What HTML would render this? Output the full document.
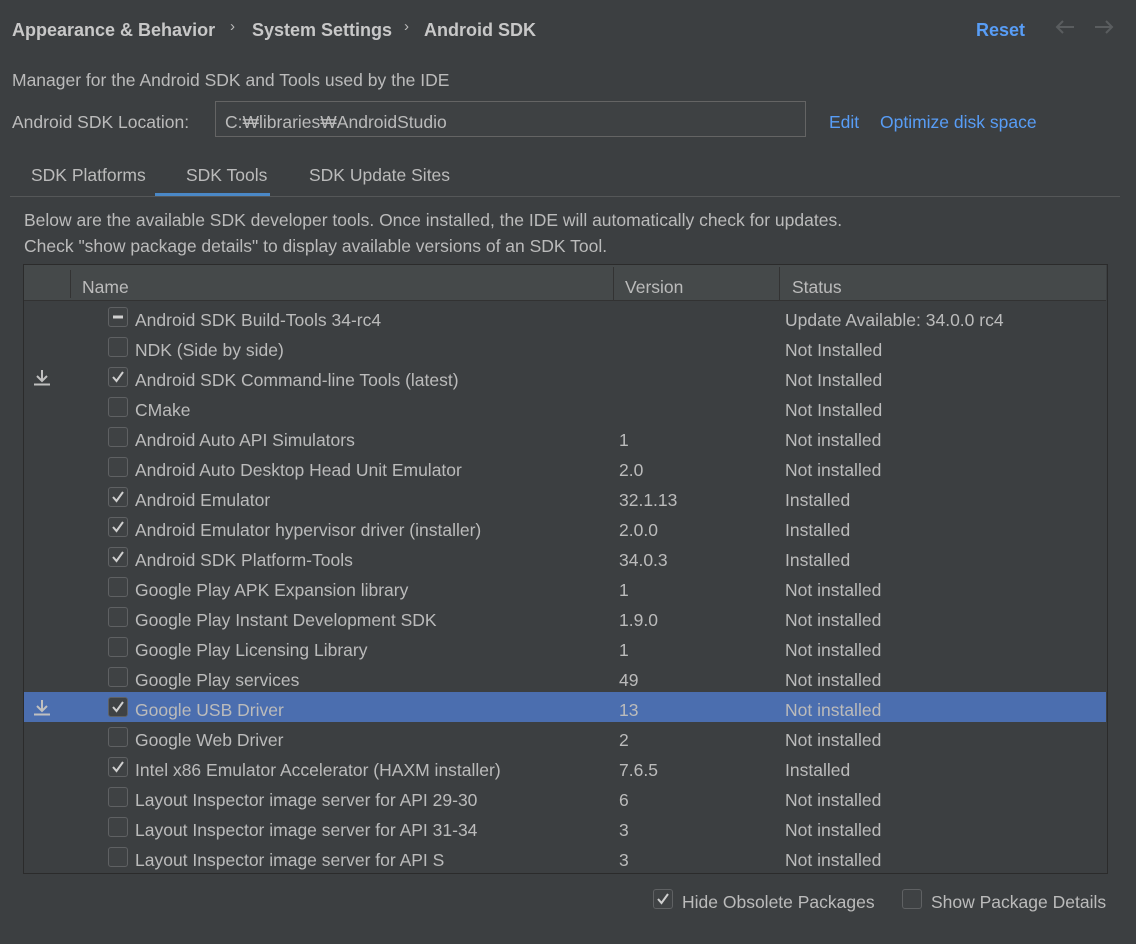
<!DOCTYPE html>
<html><head><meta charset="utf-8"><style>
*{box-sizing:border-box;margin:0;padding:0}
body{width:1136px;height:944px;background:#3c3f41;color:#bbbbbb;font-family:"Liberation Sans","Noto Sans CJK KR",sans-serif;font-size:17.5px;position:relative;overflow:hidden}
.a{position:absolute;white-space:nowrap}
.b{font-weight:bold;font-size:18px;color:#c8c8c8}
.link{color:#589df6}
.cb{position:absolute;width:20px;height:20px;border:1px solid #5f6163;border-radius:3px;background:#3f4244}
.cb svg{position:absolute;left:2px;top:2px}
.row{position:absolute;left:24px;width:1082px;height:30px}
.row span{position:absolute;top:8px}
.sel{background:#4b6eaf}
</style></head><body>
<div class="a b" style="left:12px;top:20px">Appearance &amp; Behavior</div>
<div class="a" style="left:230px;top:18px;font-size:15px">›</div>
<div class="a b" style="left:252px;top:20px">System Settings</div>
<div class="a" style="left:404px;top:18px;font-size:15px">›</div>
<div class="a b" style="left:424px;top:20px">Android SDK</div>
<div class="a b link" style="left:976px;top:20px;color:#589df6">Reset</div>
<svg class="a" style="left:1054px;top:19px" width="22" height="16"><path d="M20 8H3M9 2L3 8l6 6" stroke="#5a5d5f" stroke-width="2" fill="none"/></svg>
<svg class="a" style="left:1093px;top:19px" width="22" height="16"><path d="M2 8h17M13 2l6 6-6 6" stroke="#5a5d5f" stroke-width="2" fill="none"/></svg>
<div class="a" style="left:12px;top:70px">Manager for the Android SDK and Tools used by the IDE</div>
<div class="a" style="left:12px;top:112px">Android SDK Location:</div>
<div class="a" style="left:215px;top:101px;width:591px;height:36px;border:1px solid #646464;background:#3e4143"></div>
<div class="a" style="left:225px;top:112px">C:₩libraries₩AndroidStudio</div>
<div class="a link" style="left:829px;top:112px">Edit</div>
<div class="a link" style="left:880px;top:112px">Optimize disk space</div>
<div class="a" style="left:31px;top:165px">SDK Platforms</div>
<div class="a" style="left:186px;top:165px">SDK Tools</div>
<div class="a" style="left:309px;top:165px">SDK Update Sites</div>
<div class="a" style="left:155px;top:193px;width:115px;height:4px;background:#4a88c7"></div>
<div class="a" style="left:10px;top:196px;width:1110px;height:1px;background:#555758"></div>
<div class="a" style="left:24px;top:210px">Below are the available SDK developer tools. Once installed, the IDE will automatically check for updates.</div>
<div class="a" style="left:24px;top:236px">Check "show package details" to display available versions of an SDK Tool.</div>
<div class="a" style="left:23px;top:264px;width:1085px;height:610px;border:1px solid #2b2b2b;background:#3c3f41"></div>
<div class="a" style="left:24px;top:265px;width:1082px;height:36px;background:#45494a;border-bottom:1px solid #323232"></div>
<div class="a" style="left:70px;top:270px;width:1px;height:28px;background:#333"></div>
<div class="a" style="left:613px;top:267px;width:1px;height:34px;background:#333"></div>
<div class="a" style="left:779px;top:267px;width:1px;height:34px;background:#333"></div>
<div class="a" style="left:82px;top:277px">Name</div>
<div class="a" style="left:625px;top:277px">Version</div>
<div class="a" style="left:792px;top:277px">Status</div>
<div id="rows"></div>
<script>
var d=[["m","Android SDK Build-Tools 34-rc4","","Update Available: 34.0.0 rc4"],
["","NDK (Side by side)","","Not Installed"],
["cd","Android SDK Command-line Tools (latest)","","Not Installed"],
["","CMake","","Not Installed"],
["","Android Auto API Simulators","1","Not installed"],
["","Android Auto Desktop Head Unit Emulator","2.0","Not installed"],
["c","Android Emulator","32.1.13","Installed"],
["c","Android Emulator hypervisor driver (installer)","2.0.0","Installed"],
["c","Android SDK Platform-Tools","34.0.3","Installed"],
["","Google Play APK Expansion library","1","Not installed"],
["","Google Play Instant Development SDK","1.9.0","Not installed"],
["","Google Play Licensing Library","1","Not installed"],
["","Google Play services","49","Not installed"],
["cds","Google USB Driver","13","Not installed"],
["","Google Web Driver","2","Not installed"],
["c","Intel x86 Emulator Accelerator (HAXM installer)","7.6.5","Installed"],
["","Layout Inspector image server for API 29-30","6","Not installed"],
["","Layout Inspector image server for API 31-34","3","Not installed"],
["","Layout Inspector image server for API S","3","Not installed"]];
var h="";
d.forEach(function(r,i){
var t=302+30*i,f=r[0];
h+='<div class="row'+(f.indexOf("s")>=0?' sel':'')+'" style="top:'+t+'px">';
if(f.indexOf("d")>=0)h+='<svg style="position:absolute;left:9px;top:6px" width="18" height="18"><path d="M9 2v10M4 8l5 5 5-5" stroke="#c0c0c0" stroke-width="2" fill="none"/><path d="M1 16.5h16" stroke="#c0c0c0" stroke-width="2"/></svg>';
h+='<div class="cb" style="left:84px;top:5px">';
if(f.indexOf("c")>=0)h+='<svg width="14" height="14"><path d="M2 7l3.5 4L12 2" stroke="#cfcfcf" stroke-width="2" fill="none"/></svg>';
if(f.indexOf("m")>=0)h+='<svg width="14" height="14"><path d="M2 7h10" stroke="#d0d0d0" stroke-width="3"/></svg>';
h+='</div><span style="left:111px">'+r[1]+'</span><span style="left:595px">'+r[2]+'</span><span style="left:761px">'+r[3]+'</span></div>';
});
document.getElementById("rows").innerHTML=h;
</script>
<div class="cb" style="left:653px;top:889px"><svg width="14" height="14"><path d="M2 7l3.5 4L12 2" stroke="#cfcfcf" stroke-width="2" fill="none"/></svg></div>
<div class="a" style="left:682px;top:892px">Hide Obsolete Packages</div>
<div class="cb" style="left:902px;top:889px"></div>
<div class="a" style="left:931px;top:892px">Show Package Details</div>
</body></html>
